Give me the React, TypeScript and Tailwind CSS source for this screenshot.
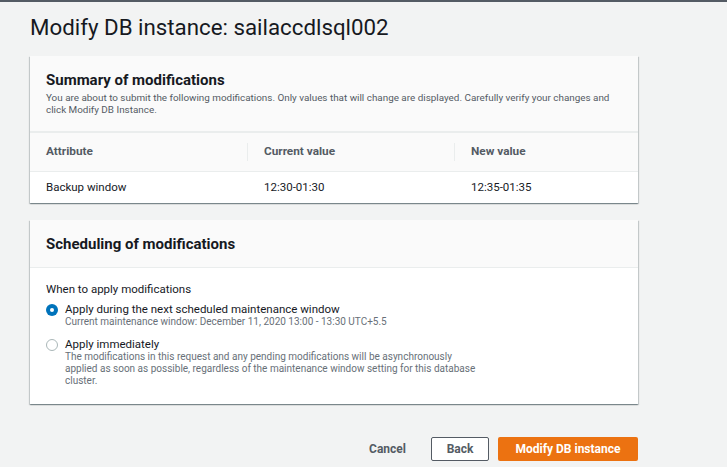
import { ReactNode } from 'react';

const font = { fontFamily: 'Roboto, "Liberation Sans", sans-serif' };

function Card({ children }: { children: ReactNode }) {
  return (
    <div className="bg-white shadow-[0_1px_1px_0_rgba(0,28,36,0.3),1px_1px_1px_0_rgba(0,28,36,0.15),-1px_1px_1px_0_rgba(0,28,36,0.15)]">
      {children}
    </div>
  );
}

function Radio({ checked }: { checked?: boolean }) {
  return checked ? (
    <span className="mt-[2px] w-[12px] h-[12px] rounded-full bg-[#0073bb] flex items-center justify-center shrink-0">
      <span className="w-[4px] h-[4px] rounded-full bg-white" />
    </span>
  ) : (
    <span className="mt-[2px] w-[12px] h-[12px] rounded-full border border-[#aab7b8] bg-white shrink-0" />
  );
}

export default function App() {
  return (
    <div className="min-h-[467px] bg-[#f2f3f3] border-t-2 border-[#545b64]" style={font}>
      <div className="w-[608px] ml-[30px] pt-[11px]">
        <h1 className="text-[22.3px] leading-[28px] text-[#16191f] font-normal">Modify DB instance: sailaccdlsql002</h1>

        {/* Summary */}
        <div className="mt-[15px]">
          <Card>
            <div className="bg-[#fafafa] px-[16px] pt-[14px] pb-[15px] border-b-2 border-[#eaeded]">
              <h2 className="text-[15px] leading-[20px] font-bold text-[#16191f]">Summary of modifications</h2>
              <p className="mt-[2px] text-[9.9px] leading-[12px] text-[#545b64]">
                You are about to submit the following modifications. Only values that will change are displayed. Carefully verify your changes and click Modify DB Instance.
              </p>
            </div>
            <table className="w-full text-left">
              <thead className="bg-[#fafafa] text-[#545b64] border-b border-[#eaeded] text-[11.8px]">
                <tr className="h-[38px]">
                  <th className="pl-[16px] w-[218px] font-bold">
                    <div className="border-r border-[#eaeded] h-[18px] flex items-center">Attribute</div>
                  </th>
                  <th className="pl-[16px] w-[207px] font-bold">
                    <div className="border-r border-[#eaeded] h-[18px] flex items-center">Current value</div>
                  </th>
                  <th className="pl-[16px] font-bold">New value</th>
                </tr>
              </thead>
              <tbody className="text-[#16191f] text-[11.5px]">
                <tr className="h-[32px]">
                  <td className="pl-[16px]">Backup window</td>
                  <td className="pl-[16px]">12:30-01:30</td>
                  <td className="pl-[16px]">12:35-01:35</td>
                </tr>
              </tbody>
            </table>
          </Card>
        </div>

        {/* Scheduling */}
        <div className="mt-[17px]">
          <Card>
            <div className="bg-[#fafafa] h-[48px] px-[16px] flex items-center border-b border-[#eaeded]">
              <h2 className="text-[15px] leading-[20px] font-bold text-[#16191f]">Scheduling of modifications</h2>
            </div>
            <div className="px-[16px] pt-[14px] pb-[17px] text-[#16191f]">
              <div className="text-[11.5px] leading-[14px]">When to apply modifications</div>
              <div className="mt-[6px] flex gap-[7px]">
                <Radio checked />
                <div>
                  <div className="text-[11.5px] leading-[14px]">Apply during the next scheduled maintenance window</div>
                  <div className="text-[10px] leading-[12px] text-[#687078]">Current maintenance window: December 11, 2020 13:00 - 13:30 UTC+5.5</div>
                </div>
              </div>
              <div className="mt-[9px] flex gap-[7px]">
                <Radio />
                <div>
                  <div className="text-[11.5px] leading-[14px]">Apply immediately</div>
                  <div className="w-[412px] text-[10px] leading-[12px] text-[#687078]">
                    The modifications in this request and any pending modifications will be asynchronously applied as soon as possible, regardless of the maintenance window setting for this database cluster.
                  </div>
                </div>
              </div>
            </div>
          </Card>
        </div>

        {/* Actions */}
        <div className="mt-[33px] flex justify-end items-center gap-[9px] text-[12px] font-bold">
          <button className="h-[24px] px-[16px] text-[#545b64]">Cancel</button>
          <button className="h-[24px] w-[58px] border border-[#545b64] rounded-[2px] bg-white text-[#545b64]">Back</button>
          <button className="h-[24px] w-[140px] rounded-[2px] bg-[#ec7211] text-white">Modify DB instance</button>
        </div>
      </div>
    </div>
  );
}
